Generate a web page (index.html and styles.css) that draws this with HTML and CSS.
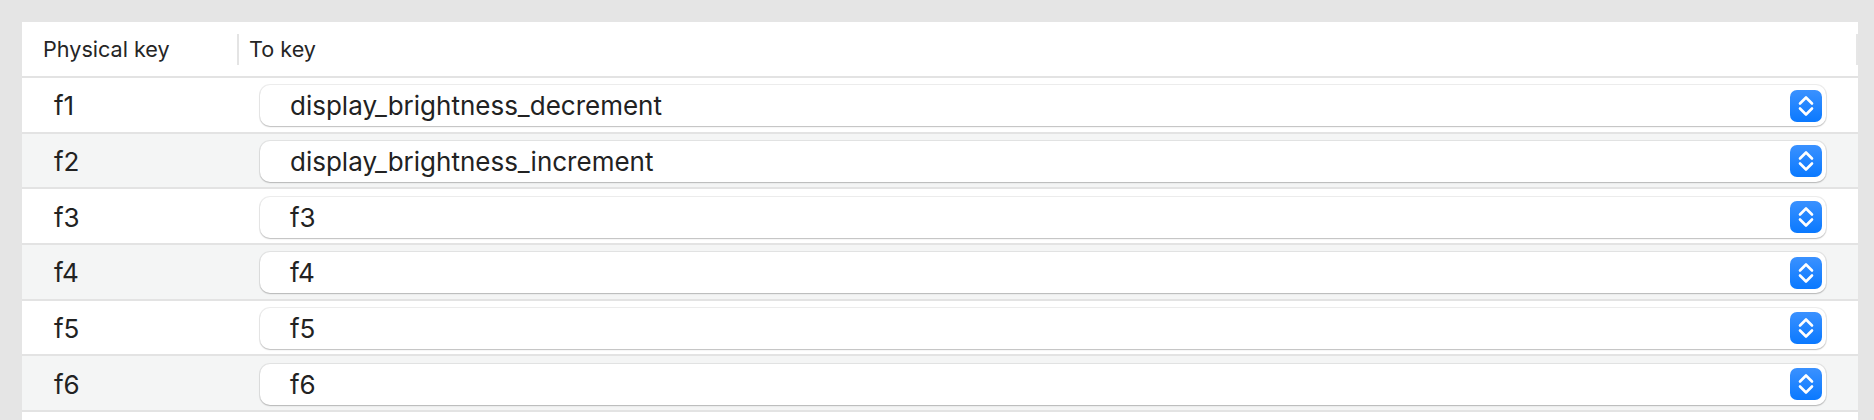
FILE: index.html
```html
<!DOCTYPE html>
<html>
<head>
<meta charset="utf-8">
<link rel="stylesheet" href="styles.css">
</head>
<body>
<div class="panel">
  <div class="header">
    <div class="hcell hcell-from">Physical key</div>
    <div class="hdivider"></div>
    <div class="hcell hcell-to">To key</div>
    <div class="hscroll"></div>
  </div>
  <div class="row">
    <div class="from">f1</div>
    <div class="popup"><span class="value">display_brightness_decrement</span><span class="stepper"><svg viewBox="0 0 32 32" width="32" height="32"><path d="M10 13.5 L16 7.5 L22 13.5 M10 18.5 L16 24.5 L22 18.5" fill="none" stroke="#fff" stroke-width="2.6" stroke-linecap="round" stroke-linejoin="round"/></svg></span></div>
  </div>
  <div class="row alt">
    <div class="from">f2</div>
    <div class="popup"><span class="value">display_brightness_increment</span><span class="stepper"><svg viewBox="0 0 32 32" width="32" height="32"><path d="M10 13.5 L16 7.5 L22 13.5 M10 18.5 L16 24.5 L22 18.5" fill="none" stroke="#fff" stroke-width="2.6" stroke-linecap="round" stroke-linejoin="round"/></svg></span></div>
  </div>
  <div class="row">
    <div class="from">f3</div>
    <div class="popup"><span class="value">f3</span><span class="stepper"><svg viewBox="0 0 32 32" width="32" height="32"><path d="M10 13.5 L16 7.5 L22 13.5 M10 18.5 L16 24.5 L22 18.5" fill="none" stroke="#fff" stroke-width="2.6" stroke-linecap="round" stroke-linejoin="round"/></svg></span></div>
  </div>
  <div class="row alt">
    <div class="from">f4</div>
    <div class="popup"><span class="value">f4</span><span class="stepper"><svg viewBox="0 0 32 32" width="32" height="32"><path d="M10 13.5 L16 7.5 L22 13.5 M10 18.5 L16 24.5 L22 18.5" fill="none" stroke="#fff" stroke-width="2.6" stroke-linecap="round" stroke-linejoin="round"/></svg></span></div>
  </div>
  <div class="row">
    <div class="from">f5</div>
    <div class="popup"><span class="value">f5</span><span class="stepper"><svg viewBox="0 0 32 32" width="32" height="32"><path d="M10 13.5 L16 7.5 L22 13.5 M10 18.5 L16 24.5 L22 18.5" fill="none" stroke="#fff" stroke-width="2.6" stroke-linecap="round" stroke-linejoin="round"/></svg></span></div>
  </div>
  <div class="row alt">
    <div class="from">f6</div>
    <div class="popup"><span class="value">f6</span><span class="stepper"><svg viewBox="0 0 32 32" width="32" height="32"><path d="M10 13.5 L16 7.5 L22 13.5 M10 18.5 L16 24.5 L22 18.5" fill="none" stroke="#fff" stroke-width="2.6" stroke-linecap="round" stroke-linejoin="round"/></svg></span></div>
  </div>
  <div class="row"></div>
</div>
</body>
</html>
```
FILE: styles.css
```css
html, body {
  margin: 0;
  padding: 0;
  overflow: hidden;
}
body {
  background: #e5e5e5;
  font-family: Inter, "Noto Sans", "Liberation Sans", sans-serif;
  color: #222222;
  padding: 22px 16px 0 22px;
  height: 420px;
  box-sizing: border-box;
  display: flex;
  flex-direction: column;
}
.panel {
  background: #ffffff;
  width: 1836px;
  flex: 1;
  min-height: 0;
  overflow: hidden;
}
.header {
  display: flex;
  align-items: center;
  height: 54px;
  border-bottom: 2px solid #e3e3e3;
  box-sizing: content-box;
}
.hcell {
  font-size: 21.6px;
  color: #252525;
}
.hcell-from {
  width: 194px;
  padding-left: 21px;
}
.hdivider {
  width: 2px;
  height: 31px;
  background: #e4e4e4;
}
.hcell-to {
  flex: 1;
  padding-left: 10px;
}
.hscroll {
  width: 2px;
  height: 31px;
  background: #e6e6e6;
}
.row {
  display: flex;
  align-items: center;
  height: 55.67px;
  box-sizing: border-box;
  border-bottom: 2px solid #e3e3e3;
  padding-top: 2px;
}
.row.alt {
  background: #f4f5f5;
}
.from {
  width: 206px;
  padding-left: 32px;
  font-size: 26px;
}
.popup {
  display: flex;
  align-items: center;
  width: 1566px;
  height: 41px;
  box-sizing: border-box;
  background: #ffffff;
  border-radius: 10px;
  box-shadow: 0 0 0 1px rgba(0, 0, 0, 0.07), 0 1px 1.5px rgba(0, 0, 0, 0.2);
  padding: 0 4px 0 30px;
}
.value {
  flex: 1;
  font-size: 26px;
}
.stepper {
  width: 32px;
  height: 32px;
  border-radius: 7px;
  background: linear-gradient(#3a91ff, #0a79ff);
  display: flex;
}
```
